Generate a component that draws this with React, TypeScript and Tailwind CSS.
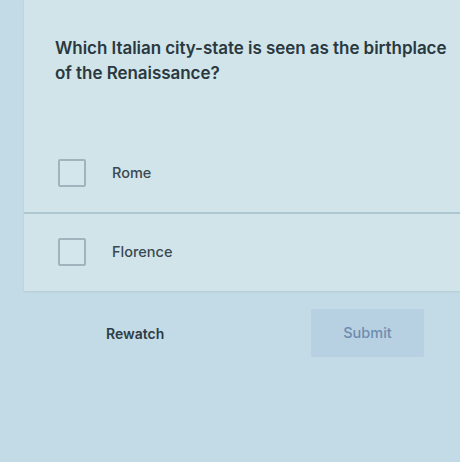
export default function App() {
  const options = ["Rome", "Florence"];
  return (
    <div
      className="h-[462px] w-[460px] overflow-hidden bg-[#c3dbe6] text-[#2a3840]"
      style={{ fontFamily: "Inter, 'Noto Sans', sans-serif" }}
    >
      {/* Question card */}
      <div className="ml-[24px] flex h-[291px] flex-col bg-[#d0e4ea] shadow-[0_1px_2px_rgba(0,0,0,0.08)]">
        <div className="h-[134px] pl-[31px] pr-2 pt-[36px]">
          <p className="max-w-[400px] text-[17px] font-semibold leading-[25px] tracking-[-0.05px]">
            Which Italian city-state is seen as the birthplace of the Renaissance?
          </p>
        </div>
        {options.map((opt, i) => (
          <label
            key={opt}
            className={
              "flex flex-1 cursor-pointer items-center gap-[26px] pl-[34px] " +
              (i === 0 ? "border-b-2 border-[#aec6d0]" : "")
            }
          >
            <span className="h-[28px] w-[28px] shrink-0 rounded-[2px] border-2 border-[#9fb4bd] bg-[#d3e6ec]" />
            <span className="text-[14.5px] font-medium text-[#3a4850]">{opt}</span>
          </label>
        ))}
      </div>

      {/* Actions */}
      <div className="flex items-center pl-[106px] pr-[36px] pt-[18px]">
        <button className="text-[14px] font-semibold text-[#2d3c45]">Rewatch</button>
        <button className="ml-auto h-[48px] w-[113px] rounded-[2px] bg-[#b7d0e2] text-[14.5px] font-medium text-[#6f8daf]">
          Submit
        </button>
      </div>
    </div>
  );
}
